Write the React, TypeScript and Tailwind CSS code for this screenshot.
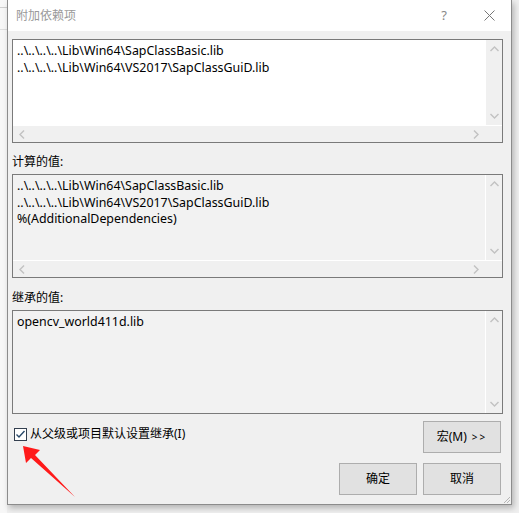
import React from 'react'

const font = { fontFamily: '"Noto Sans", "Noto Sans CJK SC", sans-serif' }

function UpArrow() {
  return (
    <svg width="9" height="6" viewBox="0 0 9 6" fill="none" stroke="#c2c2c2" strokeWidth="1.4">
      <polyline points="0.5 5 4.5 1 8.5 5" />
    </svg>
  )
}
function DownArrow() {
  return (
    <svg width="9" height="6" viewBox="0 0 9 6" fill="none" stroke="#c2c2c2" strokeWidth="1.4">
      <polyline points="0.5 1 4.5 5 8.5 1" />
    </svg>
  )
}
function LeftArrow() {
  return (
    <svg width="6" height="9" viewBox="0 0 6 9" fill="none" stroke="#c2c2c2" strokeWidth="1.4">
      <polyline points="5 0.5 1 4.5 5 8.5" />
    </svg>
  )
}
function RightArrow() {
  return (
    <svg width="6" height="9" viewBox="0 0 6 9" fill="none" stroke="#c2c2c2" strokeWidth="1.4">
      <polyline points="1 0.5 5 4.5 1 8.5" />
    </svg>
  )
}

interface BoxProps {
  lines: string[]
  bg: string
  hscroll?: boolean
}

function ListBox({ lines, bg, hscroll = true }: BoxProps) {
  return (
    <div className={`h-[104px] border border-[#7a7a7a] flex flex-col ${bg}`}>
      <div className="flex flex-1 min-h-0">
        <div className="flex-1 pt-[3px] pl-[4px] text-[12.4px] leading-[16.5px] text-black whitespace-nowrap overflow-hidden">
          {lines.map((l) => (
            <div key={l}>{l}</div>
          ))}
        </div>
        <div className="w-[17px] bg-[#f0f0f0] border-l border-white flex flex-col items-center justify-between py-[6px]">
          <UpArrow />
          <DownArrow />
        </div>
      </div>
      {hscroll && (
        <div className="h-[17px] flex border-t border-white">
          <div className="flex-1 bg-[#f0f0f0] flex items-center justify-between px-[6px]">
            <LeftArrow />
            <RightArrow />
          </div>
          <div className="w-[17px] bg-[#f0f0f0]" />
        </div>
      )}
    </div>
  )
}

function Btn({ children }: { children: React.ReactNode }) {
  return (
    <div className="w-[78px] h-[32px] bg-[#e1e1e1] border border-[#adadad] flex items-center justify-center text-[12px] text-black">
      {children}
    </div>
  )
}

export default function App() {
  return (
    <div className="w-[519px] h-[513px] bg-[#efefef] relative overflow-hidden flex" style={font}>
      {/* background strip on the left */}
      <div className="w-[7px] flex flex-col bg-[#f7f7f7]">
        <div className="h-[8px] border-b border-[#cfcfcf]" />
        <div className="h-[22px] border-b border-[#dedede]" />
        <div className="flex-1" />
      </div>

      {/* dialog */}
      <div className="w-[505px] h-[505px] border-x border-b border-[#8c8c8c] bg-[#f0f0f0] flex flex-col shadow-[2px_3px_6px_rgba(0,0,0,0.25)]">
        <div className="h-[31px] bg-white flex items-center pl-[8px] pr-[16px] shrink-0">
          <span className="text-[12px] text-[#999999]">附加依赖项</span>
          <span className="ml-auto text-[13px] text-[#888888] mr-[37px]">?</span>
          <svg width="11" height="11" viewBox="0 0 11 11" stroke="#777" strokeWidth="1">
            <line x1="0.5" y1="0.5" x2="10.5" y2="10.5" />
            <line x1="10.5" y1="0.5" x2="0.5" y2="10.5" />
          </svg>
        </div>

        <div className="flex-1 flex flex-col pl-[4px] pr-[8px] pt-[8px] relative">
          <ListBox
            bg="bg-white"
            lines={['..\\..\\..\\..\\Lib\\Win64\\SapClassBasic.lib', '..\\..\\..\\..\\Lib\\Win64\\VS2017\\SapClassGuiD.lib']}
          />
          <div className="pt-[11px] pb-[4px] leading-[16px] text-[12px] text-black">计算的值:</div>
          <ListBox
            bg="bg-[#f2f2f2]"
            lines={[
              '..\\..\\..\\..\\Lib\\Win64\\SapClassBasic.lib',
              '..\\..\\..\\..\\Lib\\Win64\\VS2017\\SapClassGuiD.lib',
              '%(AdditionalDependencies)',
            ]}
          />
          <div className="pt-[12px] pb-[4px] leading-[16px] text-[12px] text-black">继承的值:</div>
          <ListBox bg="bg-[#f2f2f2]" hscroll={false} lines={['opencv_world411d.lib']} />

          <div className="mt-[7px] flex justify-between pr-[2px]">
            <div className="flex items-center gap-[3px] mt-[6px] self-start pl-[2px]">
              <svg width="13" height="13" viewBox="0 0 13 13">
                <rect x="0.5" y="0.5" width="12" height="12" fill="white" stroke="#333f4f" />
                <polyline points="2.5 6.5 5 9 10.5 3" fill="none" stroke="#2a4a6a" strokeWidth="1.4" />
              </svg>
              <span className="text-[12px] leading-[14px] text-black">从父级或项目默认设置继承(I)</span>
            </div>
            <Btn>
              宏(M)
              <span className="ml-[5px] text-[10px] tracking-[2px]">&gt;&gt;</span>
            </Btn>
          </div>

          <div className="mt-[10px] flex justify-end gap-[6px] pr-[2px]">
            <Btn>确定</Btn>
            <Btn>取消</Btn>
          </div>

          {/* resize grip */}
          <svg className="absolute right-0 bottom-0" width="10" height="10" viewBox="0 0 10 10" stroke="#b5b5b5">
            <line x1="9" y1="3" x2="3" y2="9" />
            <line x1="9" y1="6" x2="6" y2="9" />
          </svg>
        </div>
      </div>

      {/* red annotation arrow */}
      <svg className="absolute left-0 top-0 pointer-events-none" width="519" height="513">
        <polygon points="23,446 40,450 35,455 75,497 31,458 26,463" fill="#ff1a1a" />
      </svg>
    </div>
  )
}
